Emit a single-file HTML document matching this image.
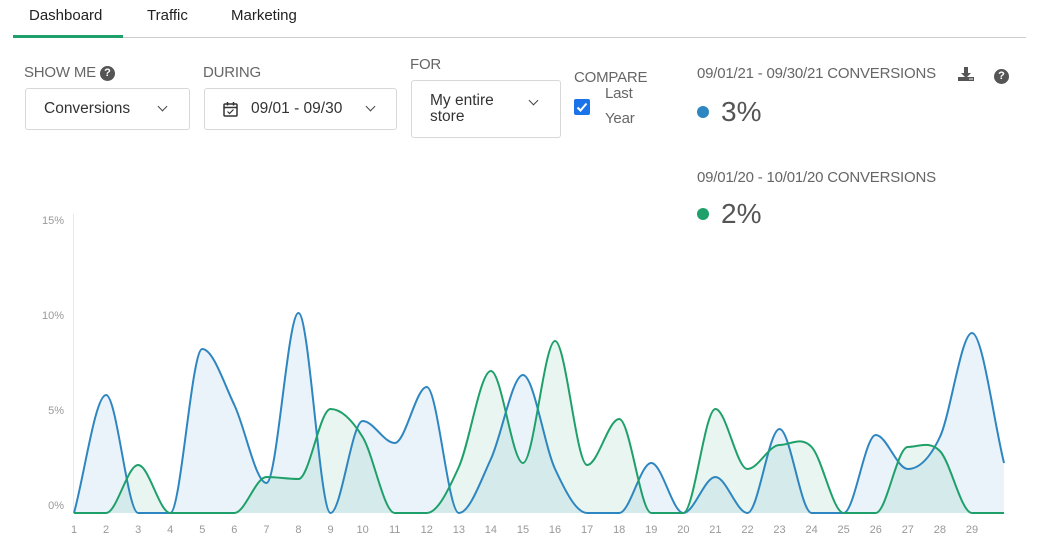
<!DOCTYPE html>
<html><head><meta charset="utf-8">
<style>
*{margin:0;padding:0;box-sizing:border-box}
body{width:1052px;height:544px;background:#fff;font-family:"Liberation Sans",sans-serif;color:#333;position:relative;overflow:hidden}
.a{position:absolute;white-space:nowrap}
.tab{font-size:15px;color:#222;top:7px}
.lbl{font-size:15px;color:#666;letter-spacing:-0.2px}
.box{position:absolute;border:1px solid #d8d8d8;border-radius:3px;background:#fff;font-size:15.5px;color:#333}
.chev{position:absolute;width:7px;height:7px;border-right:1.5px solid #444;border-bottom:1.5px solid #444;transform:rotate(45deg)}
.q{display:inline-block;width:15px;height:15px;border-radius:50%;background:#555;color:#fff;font-size:11px;font-weight:bold;text-align:center;line-height:15px}
.yl{font-size:11px;color:#999;text-align:right;width:40px}
.xl{font-size:11px;color:#999;width:20px;text-align:center}
</style></head><body>
<div class="a tab" style="left:29px">Dashboard</div>
<div class="a tab" style="left:147px">Traffic</div>
<div class="a tab" style="left:231px">Marketing</div>
<div class="a" style="left:13px;top:37px;width:1013px;height:1px;background:#ccc"></div>
<div class="a" style="left:13px;top:35px;width:110px;height:3px;background:#1fa06a"></div>

<div class="a lbl" style="left:24px;top:64px">SHOW ME <span class="q" style="vertical-align:1px">?</span></div>
<div class="box" style="left:25px;top:88px;width:165px;height:42px"><span class="a" style="left:18px;top:11px">Conversions</span><span class="chev" style="left:133px;top:14px"></span></div>
<div class="a lbl" style="left:203px;top:64px">DURING</div>
<div class="box" style="left:204px;top:88px;width:193px;height:42px">
<svg class="a" style="left:18px;top:12px" width="15" height="16" viewBox="0 0 15 16"><rect x="1" y="3" width="13" height="12" rx="1" fill="none" stroke="#333" stroke-width="1.5"/><line x1="1" y1="6.5" x2="14" y2="6.5" stroke="#333" stroke-width="1.5"/><line x1="4.5" y1="1" x2="4.5" y2="4.5" stroke="#333" stroke-width="1.5"/><line x1="10.5" y1="1" x2="10.5" y2="4.5" stroke="#333" stroke-width="1.5"/><path d="M4.5 10.5l2 2 4-4" fill="none" stroke="#333" stroke-width="1.2"/></svg>
<span class="a" style="left:46px;top:11px">09/01 - 09/30</span><span class="chev" style="left:162px;top:14px"></span></div>
<div class="a lbl" style="left:410px;top:56px">FOR</div>
<div class="box" style="left:411px;top:80px;width:150px;height:58px"><span class="a" style="left:18px;top:12px;line-height:16px;white-space:normal;width:90px">My entire store</span><span class="chev" style="left:118px;top:16px"></span></div>
<div class="a lbl" style="left:574px;top:69px">COMPARE</div>
<div class="a" style="left:574px;top:99px;width:16px;height:16px;background:#1a73e8;border-radius:2px"><svg width="16" height="16"><path d="M3.5 8.5l3 3 6-7" fill="none" stroke="#fff" stroke-width="2"/></svg></div>
<div class="a lbl" style="left:605px;top:85px">Last</div>
<div class="a lbl" style="left:605px;top:110px">Year</div>

<div class="a lbl" style="left:697px;top:65px">09/01/21 - 09/30/21 CONVERSIONS</div>
<svg class="a" style="left:958px;top:66px" width="16" height="16" viewBox="0 0 16 16"><path d="M6 1h4v6h3l-5 5-5-5h3z" fill="#555"/><rect x="0" y="11" width="16" height="4" fill="#555"/><circle cx="12" cy="13" r="0.8" fill="#fff"/><circle cx="14" cy="13" r="0.8" fill="#fff"/></svg>
<div class="a" style="left:994px;top:66px"><span class="q">?</span></div>
<div class="a" style="left:697px;top:106px;width:12px;height:12px;border-radius:50%;background:#2e86c1"></div>
<div class="a" style="left:721px;top:96px;font-size:28px;color:#555">3%</div>
<div class="a lbl" style="left:697px;top:169px">09/01/20 - 10/01/20 CONVERSIONS</div>
<div class="a" style="left:697px;top:208px;width:12px;height:12px;border-radius:50%;background:#1fa06a"></div>
<div class="a" style="left:721px;top:198px;font-size:28px;color:#555">2%</div>

<div class="a yl" style="left:24px;top:215px">15%</div>
<div class="a yl" style="left:24px;top:310px">10%</div>
<div class="a yl" style="left:24px;top:405px">5%</div>
<div class="a yl" style="left:24px;top:500px">0%</div>
<div class="a" style="left:73px;top:214px;width:1px;height:300px;background:#e8e8e8"></div>
<div id="xl"></div>
<svg class="a" style="left:0;top:0" width="1052" height="544" id="ch"></svg>
<script>
var B=[0,5.9,0,0,8.2,5.4,1.5,10,0,4.6,3.5,6.3,0,2.7,6.9,2.2,0,0,2.5,0,1.8,0,4.2,0,0,3.9,2.2,3.8,9,2.5];
var G=[0,0,2.4,0,0,0,1.8,1.7,5.2,3.8,0,0,2.3,7.1,2.5,8.6,2.4,4.7,0,0,5.2,2.2,3.4,3.3,0,0,3.3,3.1,0,0];
var x0=74,dx=32.07,y0=513,k=20;
function path(v){var p=v.map(function(a,i){return[x0+i*dx,y0-a*k]});var n=p.length,m=[];
for(var i=0;i<n;i++){var s0=i>0?(p[i][1]-p[i-1][1])/dx:null,s1=i<n-1?(p[i+1][1]-p[i][1])/dx:null;var t;
if(s0===null)t=s1;else if(s1===null)t=s0;else if(s0*s1<=0)t=0;else t=(s0+s1)/2;m.push(t)}
var d="M"+p[0][0]+" "+p[0][1];for(var i=0;i<n-1;i++){var h=dx/3;d+=" C"+(p[i][0]+h)+" "+(p[i][1]+m[i]*h)+" "+(p[i+1][0]-h)+" "+(p[i+1][1]-m[i+1]*h)+" "+p[i+1][0]+" "+p[i+1][1]}return d}
var bl=path(B),gr=path(G),end=x0+29*dx;
var s='<path d="'+bl+' L'+end+' '+y0+' L'+x0+' '+y0+'Z" fill="rgba(46,134,193,0.1)"/>'+
'<path d="'+gr+' L'+end+' '+y0+' L'+x0+' '+y0+'Z" fill="rgba(31,160,106,0.1)"/>'+
'<path d="'+bl+'" fill="none" stroke="#2e86c1" stroke-width="2"/>'+
'<path d="'+gr+'" fill="none" stroke="#1fa06a" stroke-width="2"/>';
document.getElementById('ch').innerHTML=s;
var h='';for(var i=1;i<=29;i++)h+='<div class="a xl" style="left:'+(x0+(i-1)*dx-10)+'px;top:524px">'+i+'</div>';
document.getElementById('xl').innerHTML=h;
</script>
</body></html>
